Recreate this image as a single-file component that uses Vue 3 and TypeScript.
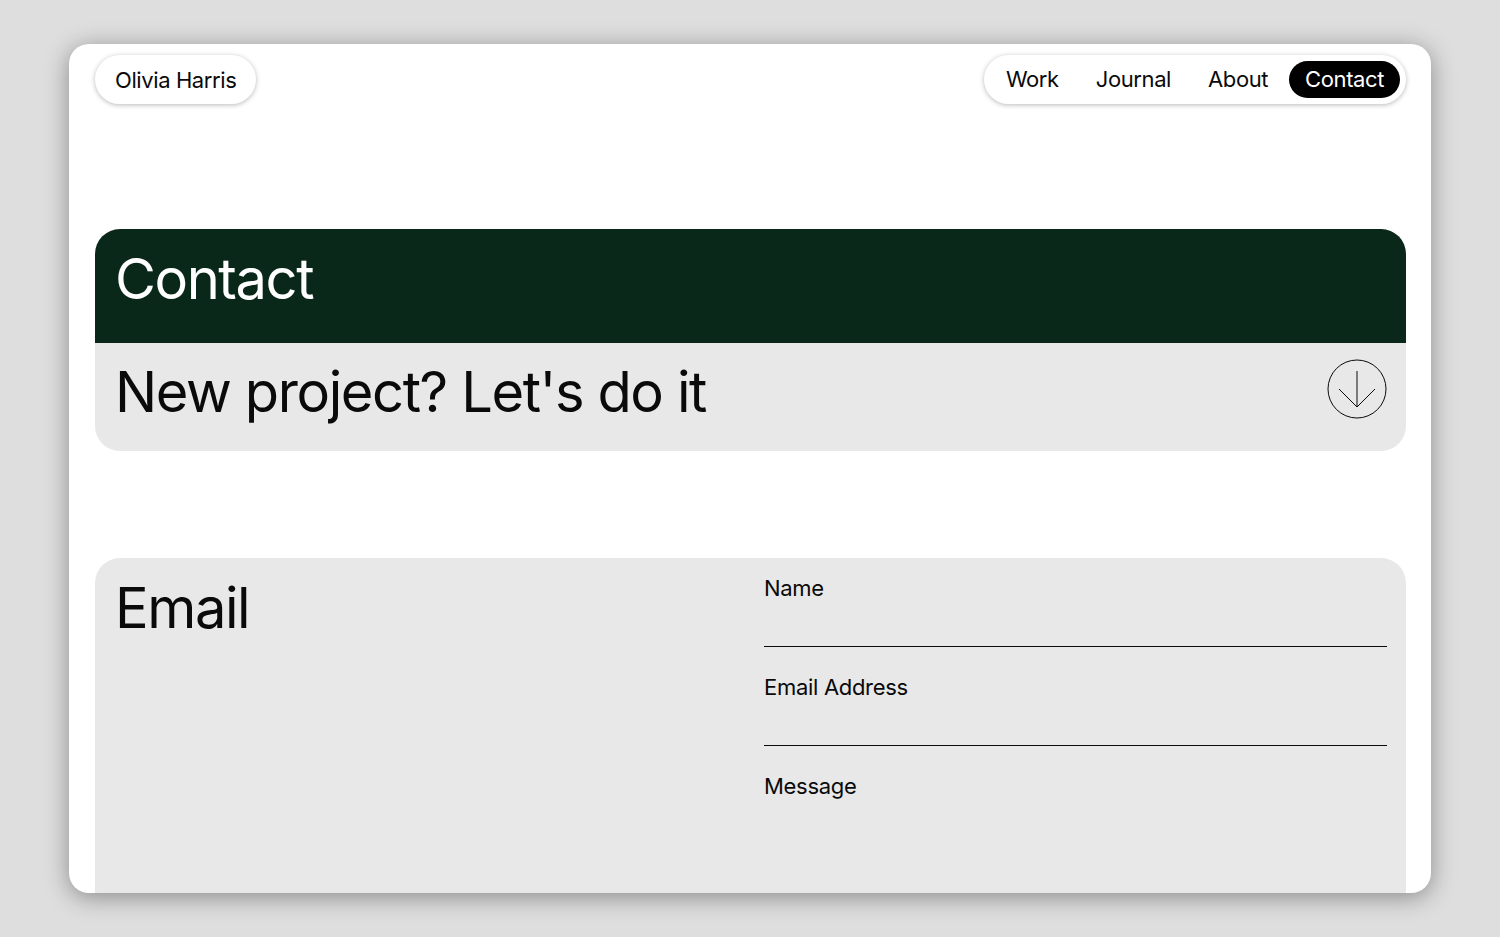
<script setup lang="ts">
const links: string[] = ['Work', 'Journal', 'About', 'Contact']
const fields: { label: string; line: boolean }[] = [
  { label: 'Name', line: true },
  { label: 'Email Address', line: true },
  { label: 'Message', line: false },
]
</script>

<template>
  <div class="stage">
    <main class="window">
      <header class="top">
        <div class="pill brand">Olivia Harris</div>
        <nav class="pill nav">
          <a v-for="l in links" :key="l" class="link" :class="{ active: l === 'Contact' }">{{ l }}</a>
        </nav>
      </header>

      <section class="hero">
        <div class="hero-dark"><h1>Contact</h1></div>
        <div class="hero-light">
          <h2>New project? Let's do it</h2>
          <svg class="arrow" viewBox="0 0 60 60" width="60" height="60" fill="none" stroke="#0a0a0a" stroke-width="1">
            <circle cx="30" cy="30" r="29" />
            <path d="M30 12V48M12 30L30 48L48 30" />
          </svg>
        </div>
      </section>

      <section class="form-card">
        <h2>Email</h2>
        <form class="fields">
          <div v-for="f in fields" :key="f.label" class="field" :class="{ line: f.line }">
            <label>{{ f.label }}</label>
          </div>
        </form>
      </section>
    </main>
  </div>
</template>

<style>
html, body { margin: 0; background: #dedede; }
</style>

<style scoped>
.stage {
  height: 937px;
  box-sizing: border-box;
  padding: 44px 69px;
  background: #dedede;
  overflow: hidden;
  font-family: Inter, "Noto Sans", sans-serif;
  color: #0a0a0a;
}
.window {
  height: 849px;
  box-sizing: border-box;
  background: #fff;
  border-radius: 20px;
  box-shadow: 0 4px 24px rgba(0, 0, 0, 0.38);
  padding: 11px 25px 0 26px;
  overflow: hidden;
}
.top { display: flex; justify-content: space-between; align-items: flex-start; }
.pill {
  height: 49px;
  box-sizing: border-box;
  background: #fff;
  border-radius: 25px;
  box-shadow: 0 1px 5px rgba(0, 0, 0, 0.28);
  display: flex;
  align-items: center;
  font-size: 22px;
  letter-spacing: -0.4px;
}
.brand { padding: 0 20px; }
.nav { padding: 0 6px 0 6px; gap: 5px; }
.link { padding: 0 16px; height: 37px; line-height: 37px; border-radius: 19px; }
.active { background: #000; color: #fff; }
.hero { margin-top: 125px; border-radius: 25px; overflow: hidden; background: #e8e8e8; }
.hero-dark { height: 114px; background: #0a2819; box-sizing: border-box; padding: 17px 20px; }
h1, h2 { margin: 0; font-weight: 400; font-size: 56px; line-height: 66px; letter-spacing: -1.4px; }
h1 { color: #fff; }
.hero-light { height: 108px; display: flex; justify-content: space-between; padding: 16px 19px 0 20px; box-sizing: border-box; }
.arrow { flex: none; }
.form-card {
  margin-top: 107px;
  height: 340px;
  background: #e8e8e8;
  border-radius: 25px 25px 0 0;
  padding: 17px 19px 0 20px;
  display: grid;
  grid-template-columns: 649px 1fr;
}
.fields { display: flex; flex-direction: column; gap: 27px; }
.field { height: 72px; box-sizing: border-box; font-size: 22px; letter-spacing: -0.3px; }
.field.line { border-bottom: 1px solid #0a0a0a; }
.field label { display: block; line-height: 26px; }
</style>
